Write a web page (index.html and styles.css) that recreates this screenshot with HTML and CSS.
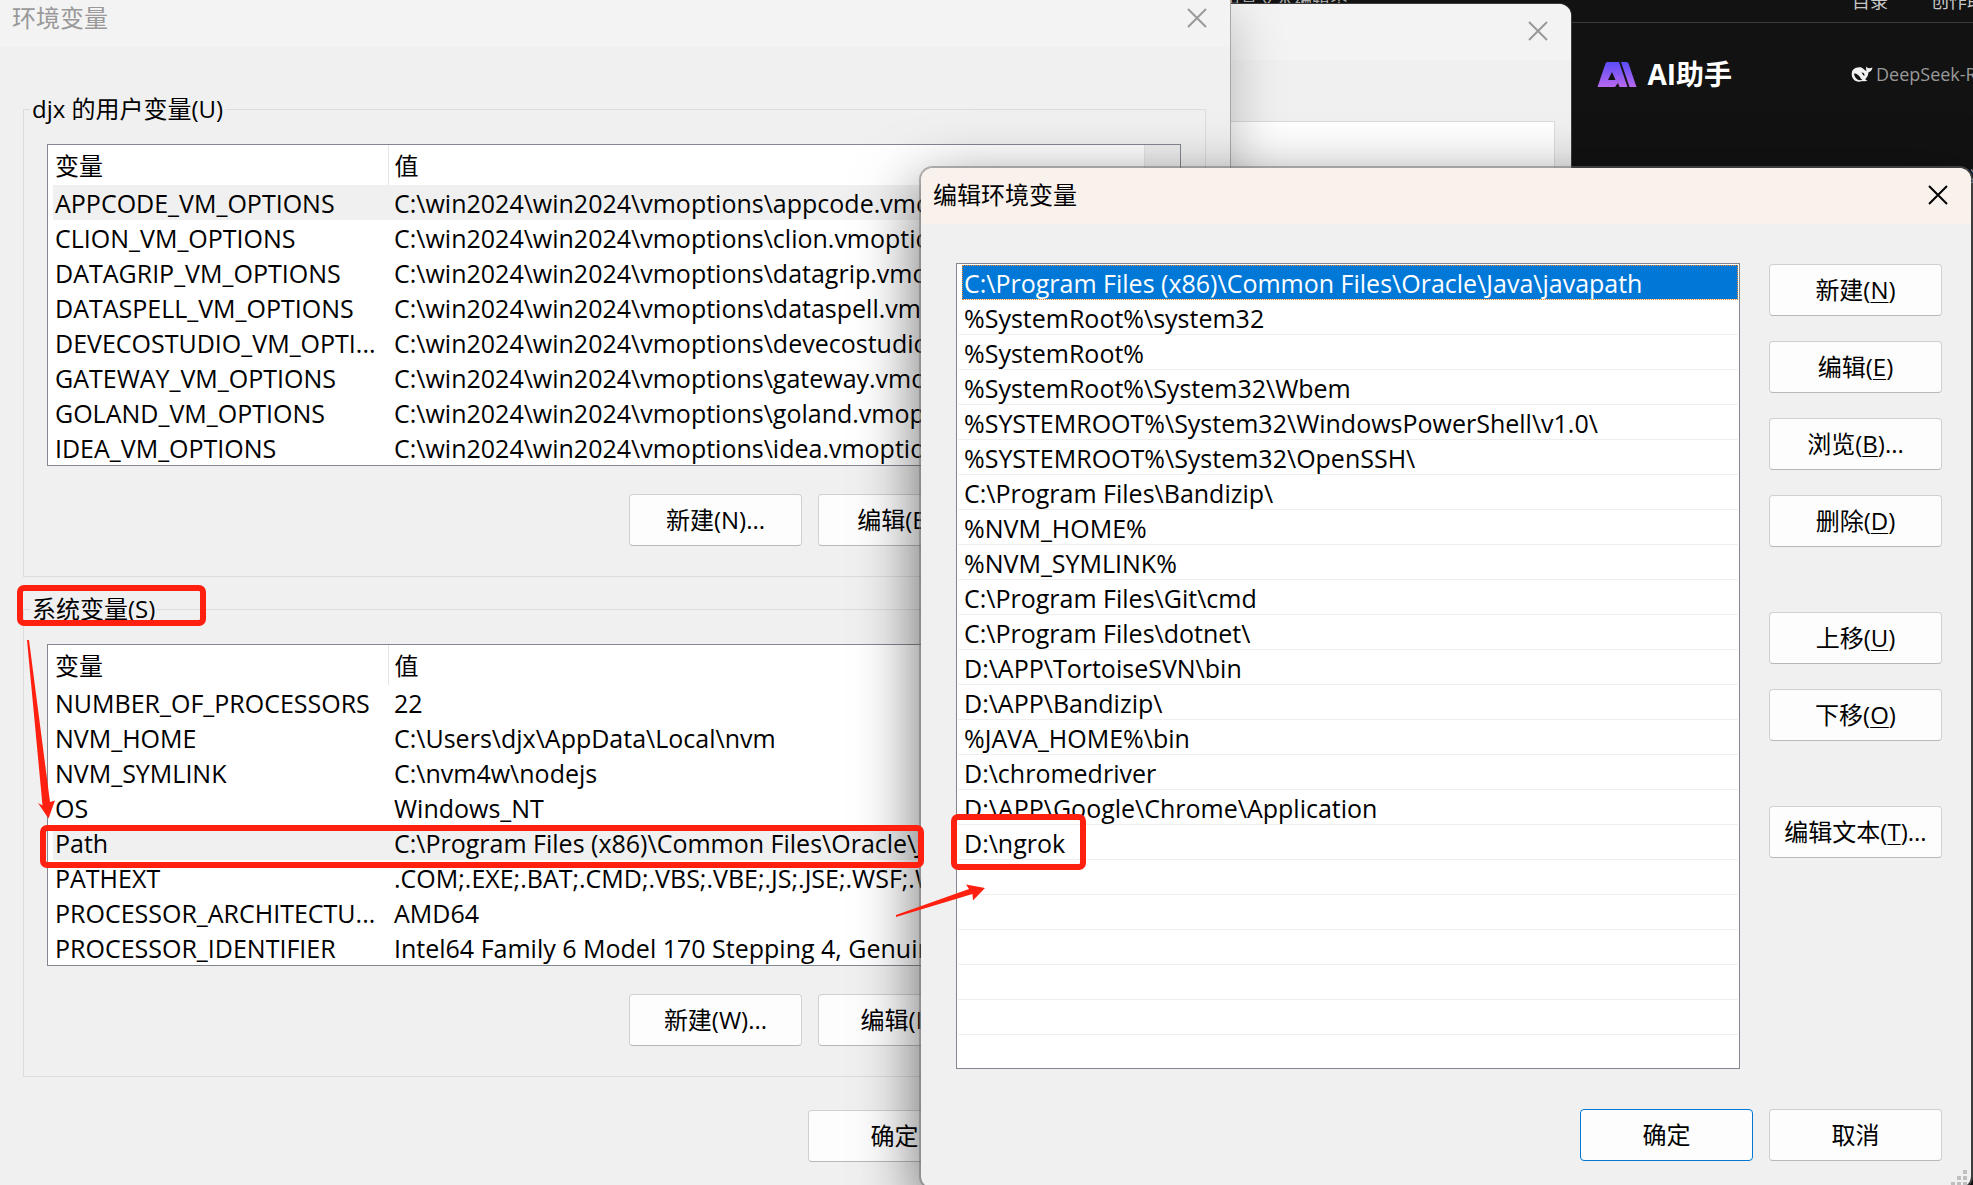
FILE: index.html
```html
<!DOCTYPE html>
<html lang="zh-CN">

<head>
    <meta charset="UTF-8">
    <meta name="viewport" content="width=device-width, initial-scale=1.0">
    <title>编辑环境变量</title>
    <link rel="stylesheet" href="styles.css">
</head>
<body>

<!-- Page behind the windows -->
<div class="page">
    <nav class="page-nav">
        <span class="page-title">使用富文本编辑类</span>
        <a href="#">目录</a>
        <a href="#">创作助手</a>
    </nav>
    <div class="assistant">
        <svg class="ai-logo" width="40" height="27" viewBox="0 0 40 27" aria-hidden="true">
            <defs>
                <linearGradient id="aiFill" x1="0" y1="0" x2="0" y2="1">
                    <stop offset="0" stop-color="#5a4cf8"/>
                    <stop offset="1" stop-color="#b868ee"/>
                </linearGradient>
            </defs>
            <path fill="url(#aiFill)" fill-rule="evenodd" d="M10 1h12l8.500 25h-8l-1.500-4-3 4H0.500L8.500 2.500Q9 1 10 1zM15 11l-4 8h7.500z"/>
            <path fill="url(#aiFill)" d="M24 1h5.500q1.500 0 2 1.500L39.500 26h-7z"/>
        </svg>
        <h1>AI助手</h1>
        <a class="model" href="#">
            <svg width="22" height="17" viewBox="0 0 22 17" aria-hidden="true">
                <path fill="#f2f2f2" d="M1.500 4.500C3.500 1.500 7.500.8 10.500 1.500c2 1 3.500 3 5 3.500-.5-1.500-.6-3-.2-4.500.8 1 1.600 1.700 2.700 1.800 1.200 0 2.200-.6 3.500-.8-.4 2.500-2 4.300-4 4.800-.2 3-1.500 5.200-3.300 7 .8.600 1.400.8 2.300 1.200-1.600 1-3.500.9-5 .4C6.500 17 1.500 14.500.8 9.500.6 7.500.8 5.800 1.500 4.500z"/>
                <path fill="#121212" d="M3 7.500c2.600-.3 4.600 1.700 5.900 3.500.9 1.400 1.400 2.200 2.500 2.800-2.800 1.200-5.600-.1-7-2.200C3.600 10.500 3.200 9 3 7.500z"/>
                <path fill="#121212" d="M10.500 6.500c1.800-.2 3.200 1 3 3.200-.9.300-1.300-.2-1.700-1.100-.4-.8-.8-1.300-1.300-2.100z"/>
            </svg>
            DeepSeek-R1
        </a>
    </div>
    <p class="answer">你可以使用内网穿透工具把本地的服务映射到公网地址</p>
</div>

<!-- System properties -->
<section class="window window-system">
    <header class="titlebar">
        <h2></h2>
        <button class="close" type="button" aria-label="关闭">
            <svg width="20" height="20" viewBox="0 0 20 20"><path d="M1 1l18 18M19 1L1 19"/></svg>
        </button>
    </header>
    <div class="tab-panel"></div>
</section>

<!-- Environment variables -->
<section class="window window-env">
    <header class="titlebar">
        <h2>环境变量</h2>
        <button class="close" type="button" aria-label="关闭">
            <svg width="20" height="20" viewBox="0 0 20 20"><path d="M1 1l18 18M19 1L1 19"/></svg>
        </button>
    </header>

    <fieldset class="group">
        <legend>djx 的用户变量(U)</legend>
        <div class="group-body">
            <div class="list">
                <table class="vars">
                    <thead>
                        <tr><th class="col-name">变量</th><th>值</th></tr>
                    </thead>
                    <tbody>
                        <tr class="current"><td>APPCODE_VM_OPTIONS</td><td>C:\win2024\win2024\vmoptions\appcode.vmoptions</td></tr>
                        <tr><td>CLION_VM_OPTIONS</td><td>C:\win2024\win2024\vmoptions\clion.vmoptions</td></tr>
                        <tr><td>DATAGRIP_VM_OPTIONS</td><td>C:\win2024\win2024\vmoptions\datagrip.vmoptions</td></tr>
                        <tr><td>DATASPELL_VM_OPTIONS</td><td>C:\win2024\win2024\vmoptions\dataspell.vmoptions</td></tr>
                        <tr><td>DEVECOSTUDIO_VM_OPTI...</td><td>C:\win2024\win2024\vmoptions\devecostudio.vmoptions</td></tr>
                        <tr><td>GATEWAY_VM_OPTIONS</td><td>C:\win2024\win2024\vmoptions\gateway.vmoptions</td></tr>
                        <tr><td>GOLAND_VM_OPTIONS</td><td>C:\win2024\win2024\vmoptions\goland.vmoptions</td></tr>
                        <tr><td>IDEA_VM_OPTIONS</td><td>C:\win2024\win2024\vmoptions\idea.vmoptions</td></tr>
                    </tbody>
                </table>
                <div class="scrollbar"></div>
            </div>
            <div class="actions">
                <button class="btn" type="button">新建(N)...</button>
                <button class="btn" type="button">编辑(E)...</button>
                <button class="btn" type="button">删除(D)</button>
            </div>
        </div>
    </fieldset>

    <fieldset class="group">
        <legend>系统变量(S)</legend>
        <div class="group-body">
            <div class="list">
                <table class="vars">
                    <thead>
                        <tr><th class="col-name">变量</th><th>值</th></tr>
                    </thead>
                    <tbody>
                        <tr><td>NUMBER_OF_PROCESSORS</td><td>22</td></tr>
                        <tr><td>NVM_HOME</td><td>C:\Users\djx\AppData\Local\nvm</td></tr>
                        <tr><td>NVM_SYMLINK</td><td>C:\nvm4w\nodejs</td></tr>
                        <tr><td>OS</td><td>Windows_NT</td></tr>
                        <tr class="current"><td>Path</td><td>C:\Program Files (x86)\Common Files\Oracle\Java\javapath</td></tr>
                        <tr><td>PATHEXT</td><td>.COM;.EXE;.BAT;.CMD;.VBS;.VBE;.JS;.JSE;.WSF;.WSH;.MSC</td></tr>
                        <tr><td>PROCESSOR_ARCHITECTU...</td><td>AMD64</td></tr>
                        <tr><td>PROCESSOR_IDENTIFIER</td><td>Intel64 Family 6 Model 170 Stepping 4, GenuineIntel</td></tr>
                    </tbody>
                </table>
                <div class="scrollbar"></div>
            </div>
            <div class="actions">
                <button class="btn" type="button">新建(W)...</button>
                <button class="btn" type="button">编辑(I)...</button>
                <button class="btn" type="button">删除(L)</button>
            </div>
        </div>
    </fieldset>

    <footer class="window-footer">
        <button class="btn" type="button">确定</button>
        <button class="btn" type="button">取消</button>
    </footer>
</section>

<!-- Edit environment variable -->
<section class="window window-edit">
    <header class="titlebar">
        <h2>编辑环境变量</h2>
        <button class="close" type="button" aria-label="关闭">
            <svg width="20" height="20" viewBox="0 0 20 20"><path d="M1 1l18 18M19 1L1 19"/></svg>
        </button>
    </header>
    <div class="edit-body">
        <ul class="paths">
            <li class="selected">C:\Program Files (x86)\Common Files\Oracle\Java\javapath</li>
            <li>%SystemRoot%\system32</li>
            <li>%SystemRoot%</li>
            <li>%SystemRoot%\System32\Wbem</li>
            <li>%SYSTEMROOT%\System32\WindowsPowerShell\v1.0\</li>
            <li>%SYSTEMROOT%\System32\OpenSSH\</li>
            <li>C:\Program Files\Bandizip\</li>
            <li>%NVM_HOME%</li>
            <li>%NVM_SYMLINK%</li>
            <li>C:\Program Files\Git\cmd</li>
            <li>C:\Program Files\dotnet\</li>
            <li>D:\APP\TortoiseSVN\bin</li>
            <li>D:\APP\Bandizip\</li>
            <li>%JAVA_HOME%\bin</li>
            <li>D:\chromedriver</li>
            <li>D:\APP\Google\Chrome\Application</li>
            <li>D:\ngrok</li>
            <li></li>
            <li></li>
            <li></li>
            <li></li>
            <li></li>
            <li></li>
        </ul>
        <div class="side">
            <button class="btn" type="button">新建(<u>N</u>)</button>
            <button class="btn" type="button">编辑(<u>E</u>)</button>
            <button class="btn" type="button">浏览(<u>B</u>)...</button>
            <button class="btn" type="button">删除(<u>D</u>)</button>
            <button class="btn spaced" type="button">上移(<u>U</u>)</button>
            <button class="btn" type="button">下移(<u>O</u>)</button>
            <button class="btn spaced" type="button">编辑文本(<u>T</u>)...</button>
        </div>
    </div>
    <footer class="window-footer">
        <button class="btn btn-default" type="button">确定</button>
        <button class="btn" type="button">取消</button>
    </footer>
    <svg class="grip" width="18" height="18" viewBox="0 0 18 18" aria-hidden="true">
        <path d="M12 0h4v4h-4zM6 6h4v4H6zM12 6h4v4h-4zM0 12h4v4H0zM6 12h4v4H6zM12 12h4v4h-4z"/>
    </svg>
</section>

<!-- Red marks -->
<svg class="marks" width="1973" height="1185" viewBox="0 0 1973 1185" aria-hidden="true">
    <rect x="20" y="588" width="183" height="35" rx="4"/>
    <rect x="43" y="828" width="878" height="37" rx="4"/>
    <rect x="954" y="817" width="129" height="50" rx="4"/>
    <path d="M27 640h2l21 162 5-1.500-6.500 18L38 803l4.500 2.500z"/>
    <path d="M896 915l73-26-3-4.500 19 3.500-12 12.500-.5-6.500L896 917z"/>
</svg>

</body>
</html>
```

FILE: styles.css
```css
* {
    box-sizing: border-box;
}

body {
    margin: 0;
    height: 100vh;
    overflow: hidden;
    position: relative;
    background-color: #121212;
    color: #000;
    font-family: 'Open Sans', 'Noto Sans CJK SC', sans-serif;
    font-size: 24px;
    line-height: 32px;
}

h1,
h2,
p,
ul {
    margin: 0;
    padding: 0;
    font-weight: 400;
}

/* Page behind */
.page-nav {
    display: flex;
    height: 23px;
    align-items: flex-start;
    justify-content: flex-end;
    gap: 43px;
    margin-right: -30px;
    border-bottom: 1px solid #3a3a3a;
    font-size: 18px;
    line-height: 2px;
}

.page-nav a {
    color: #c8c8c8;
    text-decoration: none;
}

.page-title {
    color: #aaa;
    margin-right: auto;
    margin-left: 1204px;
}

.assistant {
    display: flex;
    align-items: center;
    justify-content: flex-end;
    height: 102px;
    margin-right: -14px;
    white-space: nowrap;
}

.ai-logo {
    margin-right: 10px;
}

.assistant h1 {
    color: #fff;
    font-size: 28px;
    font-weight: 700;
}

.model {
    display: flex;
    align-items: center;
    gap: 3px;
    margin-left: 119px;
    color: #999;
    font-size: 18px;
    text-decoration: none;
}

.answer {
    margin: 36px 0 0 1600px;
    color: #8f93a8;
    font-size: 18px;
    white-space: nowrap;
}

/* Windows */
.window {
    position: absolute;
    display: flex;
    flex-direction: column;
    background: #f0f0f0;
}

.titlebar {
    display: flex;
    align-items: center;
    justify-content: space-between;
    flex-shrink: 0;
    height: 56px;
    padding: 0 23px 2px 12px;
    background: #f3f3f3;
    color: #999;
}

.titlebar h2 {
    font-size: 24px;
}

.close {
    display: flex;
    padding: 0;
    border: none;
    background: none;
    color: inherit;
}

.close path {
    fill: none;
    stroke: currentColor;
    stroke-width: 2;
}

.window-system {
    top: 4px;
    left: 400px;
    width: 1171px;
    height: 800px;
    border-radius: 12px;
    overflow: hidden;
    box-shadow: 0 0 0 1px #3c3c3c;
}

.tab-panel {
    flex: 1;
    margin: 61px 16px 17px;
    background: #fff;
    border: 1px solid #dcdcdc;
}

.window-env {
    top: 0;
    left: 0;
    width: 1230px;
    height: 100%;
    box-shadow: 0 0 0 1px #a8a8a8, 0 16px 50px rgba(0, 0, 0, 0.25);
}

.window-env .titlebar {
    height: 47px;
    padding-bottom: 11px;
}

.window-edit {
    top: 168px;
    left: 921px;
    right: 2px;
    height: 1020px;
    border-radius: 12px;
    box-shadow: 0 0 0 2px rgba(110, 110, 110, 0.5), 0 20px 64px rgba(0, 0, 0, 0.6);
}

.window-edit .titlebar {
    background: #f9f1ec;
    border-radius: 12px 12px 0 0;
    color: #000;
}

/* Group boxes */
.group {
    margin: 46px 24px 0 23px;
    padding: 0 6px;
    border: 1px solid #dcdcdc;
}

.group + .group {
    margin-top: 16px;
}

.group legend {
    padding: 0 2px;
}

.group-body {
    padding: 19px 18px 30px 17px;
}

.list {
    display: flex;
    padding-left: 5px;
    border: 1px solid #828790;
    background: #fff;
}

.vars {
    flex: 1;
    table-layout: fixed;
    border-collapse: collapse;
}

.vars th,
.vars td {
    height: 35px;
    padding: 0 6px;
    overflow: hidden;
    font-weight: 400;
    text-align: left;
    white-space: nowrap;
}

.vars td {
    font-size: 25px;
}

.vars th {
    height: 40px;
    padding-top: 2px;
    border-right: 1px solid #e5e5e5;
}

.vars th:first-child,
.vars td:first-child {
    padding-left: 2px;
    padding-right: 0;
}

.col-name {
    width: 335px;
}

.current {
    background: #f0f0f0;
}

.scrollbar {
    width: 35px;
    background: #f0f0f0;
}

/* Buttons */
.btn {
    width: 173px;
    height: 52px;
    padding: 0;
    border: 1px solid #d0d0d0;
    border-bottom-color: #b8b8b8;
    border-radius: 4px;
    background: #fdfdfd;
    color: #000;
    font: inherit;
    white-space: nowrap;
}

.btn u {
    text-decoration-thickness: 1px;
    text-underline-offset: 3px;
}

.btn-default {
    border-color: #0078d4;
}

.actions {
    display: flex;
    justify-content: flex-end;
    gap: 16px;
    margin-top: 28px;
    padding-right: 1px;
}

.window-footer {
    display: flex;
    justify-content: flex-end;
    gap: 16px;
    margin: 33px 60px 0 0;
}

.window-edit .window-footer {
    margin: 40px 29px 0 0;
}

/* Path list */
.edit-body {
    display: flex;
    gap: 29px;
    padding: 39px 29px 0 35px;
}

.paths {
    flex: 1;
    padding: 1px 1px 0;
    border: 1px solid #828790;
    background: #fff;
    font-size: 25px;
    list-style: none;
}

.paths li {
    height: 35px;
    padding: 2px 6px 0;
    border-bottom: 1px solid #eee;
    white-space: nowrap;
}

.paths li:last-child {
    height: 33px;
    border-bottom: none;
}

.paths .selected {
    margin-left: 4px;
    padding-left: 2px;
    background: #0078d7;
    color: #fff;
    outline: 1px dotted #ff8728;
    outline-offset: -1px;
}

.side {
    display: flex;
    flex-direction: column;
    gap: 25px;
    padding-top: 1px;
}

.side .spaced {
    margin-top: 40px;
}

.grip {
    position: absolute;
    right: 2px;
    bottom: 0;
    fill: #bfbfbf;
}

.marks {
    position: absolute;
    top: 0;
    left: 0;
    pointer-events: none;
}

.marks rect {
    fill: none;
    stroke: #ff2010;
    stroke-width: 6;
}

.marks path {
    fill: #ff2010;
}
```
